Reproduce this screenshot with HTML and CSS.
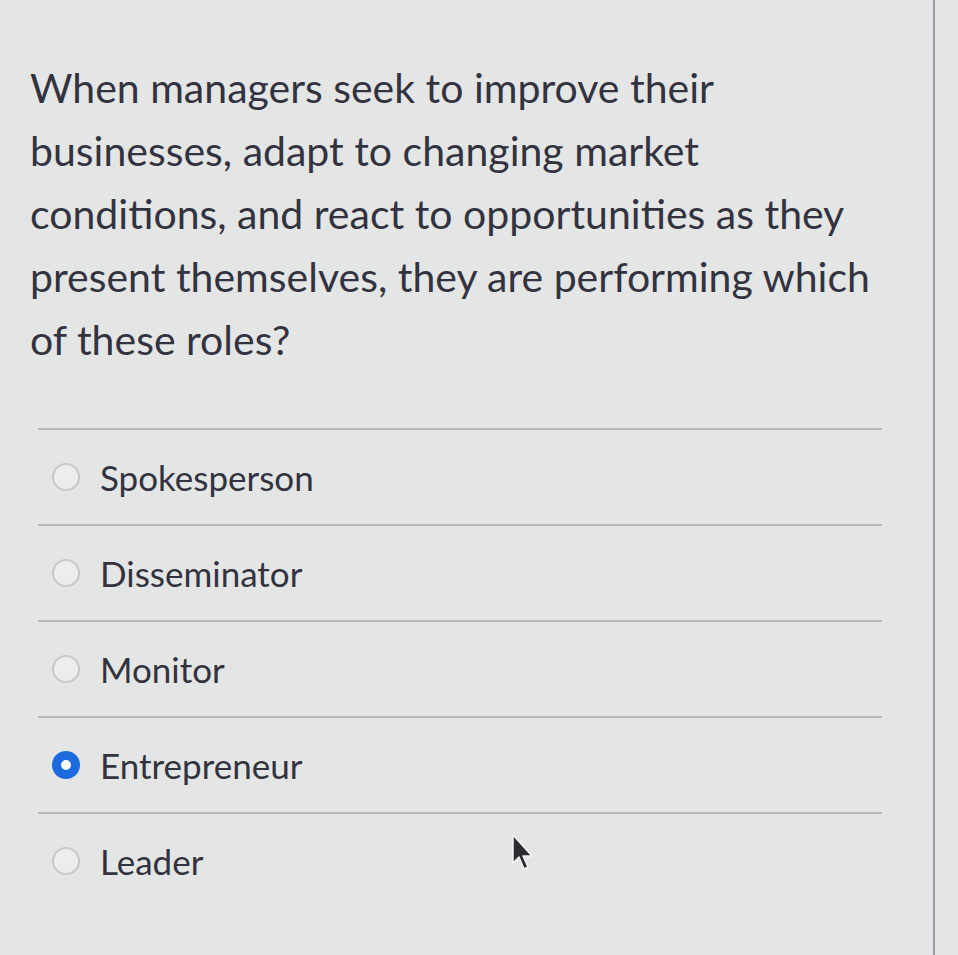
FILE: index.html
```html
<!DOCTYPE html>
<html lang="en">
<head>
<meta charset="utf-8">
<title>Question</title>
<link rel="stylesheet" href="styles.css">
</head>
<body>
<div class="page">
  <div class="panel">
    <p class="question">When managers seek to improve their<br>businesses, adapt to changing market<br>conditions, and react to opportunities as they<br>present themselves, they are performing which<br>of these roles?</p>
    <ul class="options">
      <li class="option"><span class="radio"></span><span class="label">Spokesperson</span></li>
      <li class="option"><span class="radio"></span><span class="label">Disseminator</span></li>
      <li class="option"><span class="radio"></span><span class="label">Monitor</span></li>
      <li class="option"><span class="radio checked"></span><span class="label">Entrepreneur</span></li>
      <li class="option"><span class="radio"></span><span class="label">Leader</span></li>
    </ul>
  </div>
  <svg class="cursor" width="26" height="40" viewBox="0 0 26 40">
    <path d="M2 2 L2 30 L8 24 L13 36 L17 34 L12 23 L21 23 Z" fill="#2a2b33" stroke="#f4f4f4" stroke-width="1.5" stroke-linejoin="round"/>
  </svg>
</div>
</body>
</html>
```
FILE: styles.css
```css
html, body {
  margin: 0;
  padding: 0;
  background: #e3e5e5;
}
.page {
  position: relative;
  width: 958px;
  height: 955px;
  overflow: hidden;
  background: #e4e6e6;
}
.panel {
  width: 935px;
  height: 955px;
  border-right: 2px solid #9c9ca6;
  box-sizing: border-box;
  font-family: Lato, "Open Sans", sans-serif;
  color: #33333f;
}
.question {
  margin: 0;
  padding: 56px 0 0 30px;
  font-size: 41px;
  line-height: 63px;
}
.options {
  list-style: none;
  margin: 57px 0 0 38px;
  padding: 0;
  width: 844px;
  border-top: 2px solid #b8baba;
}
.option {
  display: flex;
  align-items: center;
  gap: 20px;
  height: 94px;
  padding-left: 14px;
  border-bottom: 2px solid #b8baba;
}
.option:last-child {
  border-bottom: none;
}
.radio {
  width: 28px;
  height: 28px;
  border-radius: 50%;
  border: 2px solid #c6c8ca;
  background: #eceeee;
  box-sizing: border-box;
  flex: none;
}
.radio.checked {
  border: 9px solid #1d6ae0;
  background: #ffffff;
}
.label {
  font-size: 35px;
  color: #33333f;
}
.cursor {
  position: absolute;
  left: 511px;
  top: 833px;
}
```
